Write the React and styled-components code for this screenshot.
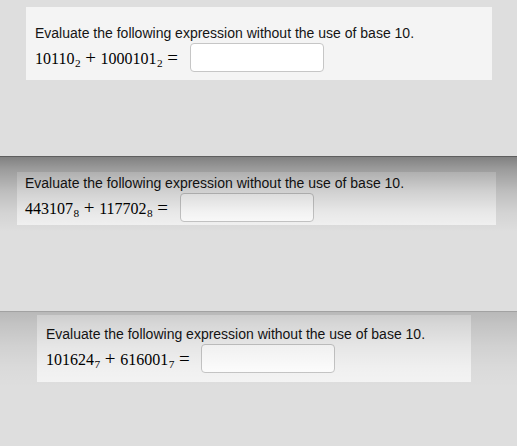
import React from "react";
import styled, { createGlobalStyle, css } from "styled-components";

const Global = createGlobalStyle`
  html, body { margin: 0; padding: 0; background: #dedede; }
  body { overflow: hidden; }
`;

const Page = styled.div`
  width: 517px;
  height: 446px;
  background: #dedede;
  display: flex;
  flex-direction: column;
`;

const Section = styled.section`
  position: relative;
  height: ${(p) => p.$h}px;
  box-sizing: border-box;
  display: flex;
  flex-direction: column;
  ${(p) =>
    p.$line &&
    css`
      border-top: 1px solid ${p.$line};
    `}
  ${(p) =>
    p.$shade &&
    css`
      &::after {
        content: "";
        position: absolute;
        left: 0;
        right: 0;
        top: 0;
        height: 80px;
        pointer-events: none;
        background: linear-gradient(
          to bottom,
          rgba(0, 0, 0, ${0.42 * p.$shade}) 0,
          rgba(0, 0, 0, ${0.3 * p.$shade}) 12px,
          rgba(0, 0, 0, ${0.15 * p.$shade}) 34px,
          rgba(0, 0, 0, ${0.05 * p.$shade}) 55px,
          rgba(0, 0, 0, 0) 75px
        );
      }
    `}
`;

const Card = styled.div`
  margin-top: ${(p) => p.$top}px;
  margin-left: ${(p) => p.$x}px;
  width: ${(p) => p.$w}px;
  box-sizing: border-box;
  padding: ${(p) => p.$pt}px 0 ${(p) => p.$pb}px ${(p) => p.$pl}px;
  background: #f4f4f4;
`;

const Prompt = styled.div`
  font-family: "Liberation Sans", Arial, sans-serif;
  font-size: 14px;
  line-height: 15px;
  color: #151515;
`;

const Row = styled.div`
  display: flex;
  align-items: center;
  margin-top: 2px;
  height: 29px;
`;

const Math = styled.span`
  font-family: "Liberation Serif", "Times New Roman", serif;
  font-size: 16px;
  color: #000;
  white-space: nowrap;
  line-height: 16px;
  padding-top: 2px;
`;

const Sub = styled.span`
  font-size: 11.3px;
  position: relative;
  top: 3px;
  margin-left: 0.5px;
`;

const Op = styled.span`
  display: inline-block;
  width: 13px;
  text-align: center;
  margin: 0 3.5px;
  font-size: 19px;
  line-height: 16px;
`;

const Answer = styled.input`
  margin-left: 7px;
  width: 134px;
  height: 29px;
  box-sizing: border-box;
  border: 1px solid #c6c6c6;
  border-radius: 4px;
  background: #fff;
  outline: none;
  padding: 0 6px;
  font-size: 14px;
`;

function Problem({ a, b, base }) {
  return (
    <>
      <Prompt>Evaluate the following expression without the use of base 10.</Prompt>
      <Row>
        <Math>
          {a}
          <Sub>{base}</Sub>
          <Op>+</Op>
          {b}
          <Sub>{base}</Sub>
          <Op>=</Op>
        </Math>
        <Answer type="text" />
      </Row>
    </>
  );
}

export default function App() {
  return (
    <Page>
      <Global />
      <Section $h={156}>
        <Card $top={7} $x={26} $w={466} $pt={19} $pb={8} $pl={9}>
          <Problem a="10110" b="1000101" base="2" />
        </Card>
      </Section>
      <Section $h={155} $line="#5e5e5e" $shade={1}>
        <Card $top={15} $x={17} $w={479} $pt={4} $pb={3} $pl={8}>
          <Problem a="443107" b="117702" base="8" />
        </Card>
      </Section>
      <Section $h={135} $line="#a2a2a2" $shade={0.4}>
        <Card $top={3} $x={37} $w={434} $pt={12} $pb={9} $pl={9}>
          <Problem a="101624" b="616001" base="7" />
        </Card>
      </Section>
    </Page>
  );
}
